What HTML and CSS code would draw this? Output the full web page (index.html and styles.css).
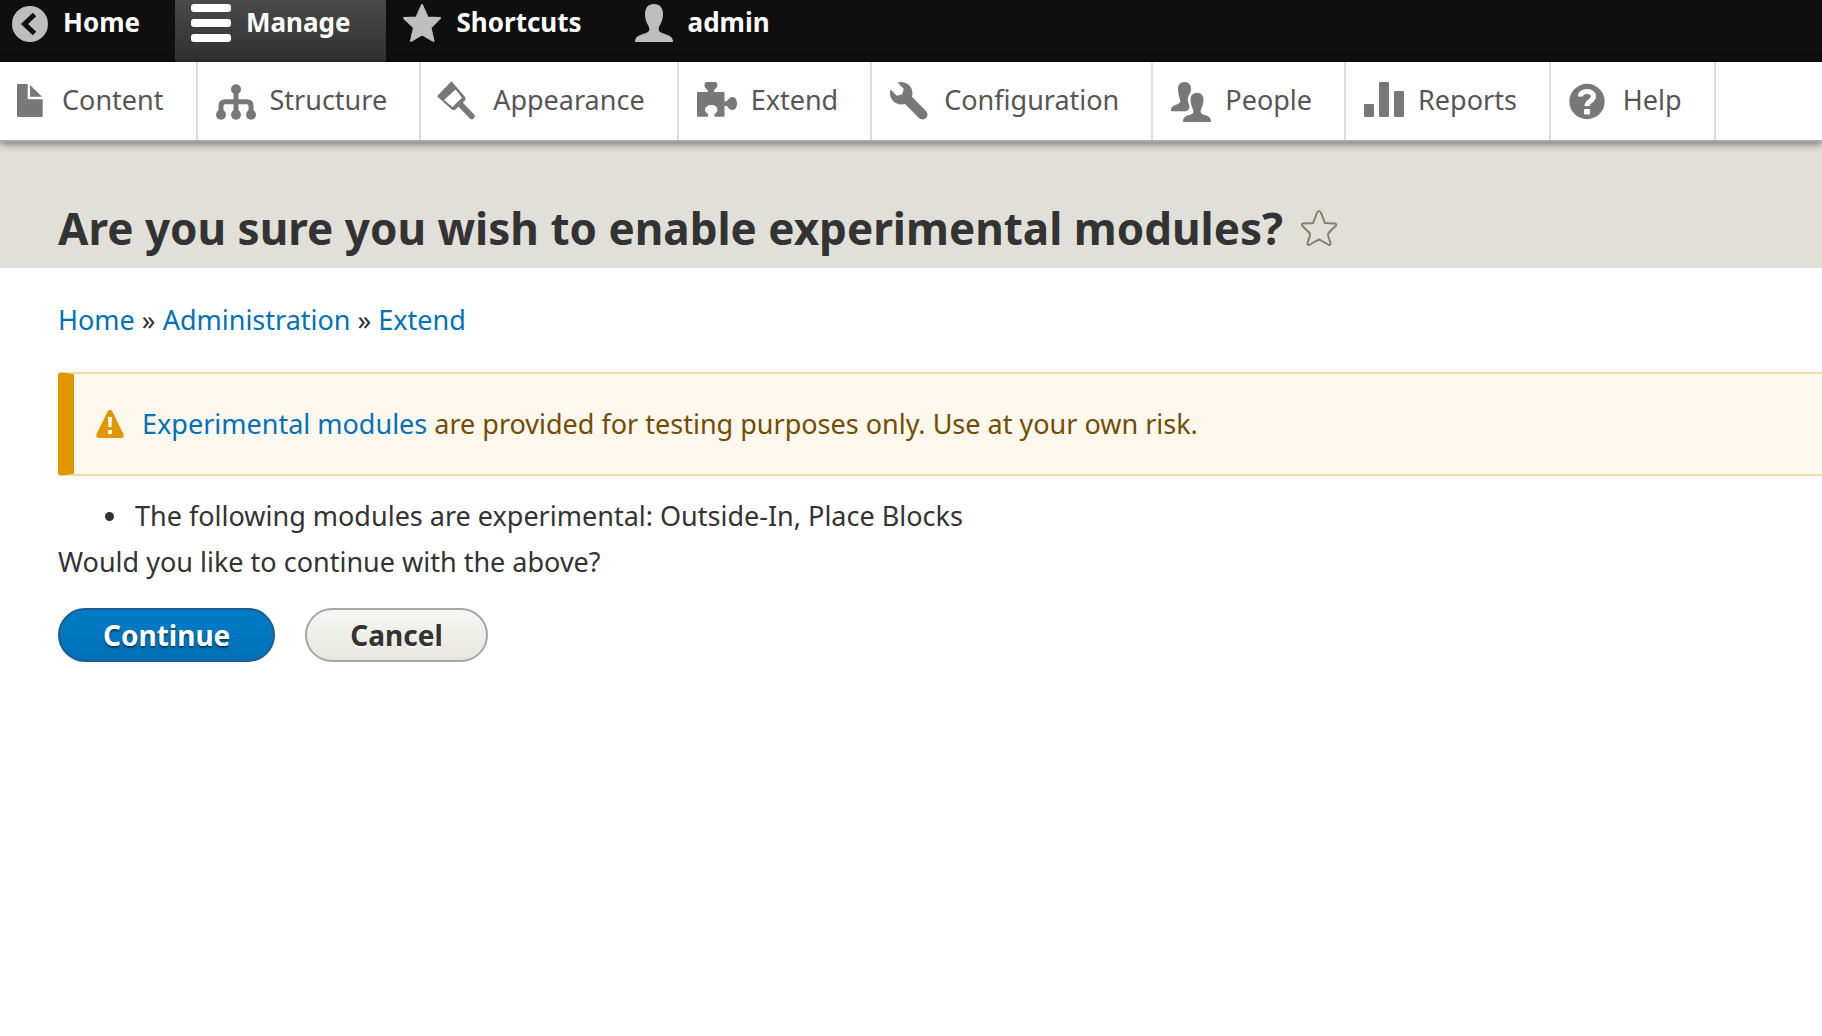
FILE: index.html
```
<!DOCTYPE html>
<html lang="en">
<head>
  <meta charset="UTF-8">
  <title>Are you sure you wish to enable experimental modules?</title>
  <meta name="viewport" content="width=device-width, initial-scale=1.0">
  <link rel="stylesheet" href="styles.css">
</head>
<body>

  <nav class="toolbar-bar" aria-label="Administration toolbar">
    <a class="tab" href="#">
      <svg class="icon" viewBox="0 0 40 40"><circle cx="22" cy="20" r="18"/><path d="M26.5 10.5L16.5 20l10 9.500" fill="none" stroke="#0f0f0f" stroke-width="5"/></svg>
      Home
    </a>
    <a class="tab active" href="#">
      <svg class="icon" viewBox="0 0 40 40"><rect width="40" height="8" rx="3"/><rect y="15" width="40" height="8" rx="3"/><rect y="30" width="40" height="8" rx="3"/></svg>
      Manage
    </a>
    <a class="tab" href="#">
      <svg class="icon" viewBox="0 0 40 40"><path d="M20 1l5.500 12.500L38 14 28.500 23.500 31.500 37 20 30.500 9 37l3-13.500L2 14l12.500-.5z" stroke="#bebebe" stroke-width="2" stroke-linejoin="round"/></svg>
      Shortcuts
    </a>
    <a class="tab" href="#">
      <svg class="icon" viewBox="0 0 40 40"><path d="M21 0c6 0 9 4 9 10 0 6-2 9-4 13-1 3 0 5 3 6 6 2 11 3 11 9H2c0-6 5-7 11-9 3-1 4-3 3-6-2-4-4-7-4-13 0-6 3-10 9-10z"/></svg>
      admin
    </a>
  </nav>

  <nav class="toolbar-tray" aria-label="Administration menu">
    <a class="tray-item" href="#">
      <svg class="icon" viewBox="0 0 40 40"><path d="M10 3h9.700v15.300h15V35q0 1-1 1H10q-1 0-1-1V4q0-1 1-1zM22 4l12 11.700H22z"/></svg>
      Content
    </a>
    <a class="tray-item" href="#">
      <svg class="icon" viewBox="0 0 40 40"><circle cx="20" cy="8.300" r="5"/><circle cx="5" cy="33.700" r="5"/><circle cx="20" cy="33.700" r="5"/><circle cx="35" cy="33.700" r="5"/><path d="M20 8v24M5 32v-7q0-4.200 4-4.200h22q4 0 4 4.200v7" fill="none" stroke="#787878" stroke-width="5"/></svg>
      Structure
    </a>
    <a class="tray-item" href="#">
      <svg class="icon" viewBox="0 0 40 40"><path d="M-2 15.300L11.700 1c.6-.4 1-.4 1.500 0l13.100 15.300v3L15.700 29.300 13 28.700zM5 19l8.500 7 9.500-9.300-6.500-8.200z" fill-rule="evenodd"/><path d="M21 23l11.700 12.300" stroke="#787878" stroke-width="6" stroke-linecap="round"/></svg>
      Appearance
    </a>
    <a class="tray-item" href="#">
      <svg class="icon" viewBox="0 0 40 40"><path d="M1 11h9c1 0 1.500-1 .5-2C9 7.500 7 6 7.500 3.500 7.700 2 8.500 1 10 1h8c1.500 0 2.300 1 2.500 2.500.3 2.500-2 4-3.300 5.500-.7 1-.2 2 .8 2h8.500q1 0 1 1v8c.5 1 2 .7 3-.5 1-1.500 2.500-3.500 5-3.500 3 0 4.500 3 4.500 6.500s-1.500 6.500-4.500 6.500c-2.500 0-4-2-5-3.300-1-1.200-2.500-1.200-3-.2V35q0 .7-1 .7h-8.500c-1-.7-.7-2.500.5-3.500 1.500-1 2-2 2-3.500 0-3-3-4.700-6-4.700s-6.500 1.700-6.500 4.700c0 1.500.7 2.500 2.200 3.500 1.200 1 1.500 2.800.5 3.500H1q-1 0-1-.7V12q0-1 1-1z"/></svg>
      Extend
    </a>
    <a class="tray-item" href="#">
      <svg class="icon" viewBox="0 0 16 16"><path transform="translate(0 .4)" d="M14.416 11.586l-.01-.008v-.001l-5.656-5.656c.15-.449.252-.921.252-1.421 0-2.485-2.016-4.500-4.502-4.500-.505 0-.981.102-1.434.255l2.431 2.431-.588 2.196-2.196.588-2.445-2.445c-.162.464-.268.956-.268 1.475 0 2.486 2.014 4.500 4.500 4.500.5 0 .972-.102 1.421-.251l5.667 5.665c.781.781 2.047.781 2.828 0s.781-2.047 0-2.828z"/></svg>
      Configuration
    </a>
    <a class="tray-item" href="#">
      <svg class="icon" viewBox="0 0 40 40"><path d="M13.500 1c4.500 0 6.500 3 6.500 7 0 2-.5 3.500-1.500 5-2 3-2 6-1 9 .7 2 1.500 4 .5 5.500-.5 1.500-1.500 2-3 2.700H0c0-4 1.500-5 5-6.500 3.500-1.400 5-2.200 4-5.200-1-3-2-6-2-10.500C7 4 9 1 13.500 1z"/><path class="front" d="M26.200 11.700c4.200 0 6.300 3 6.300 7 0 4.500-1.500 6.800-2.500 9.800s0 4.500 3 5.300c4.500 1.200 7 2.700 7 7.200H12c0-4.500 2.500-6 7-7.200 3-.8 4-2.300 3-5.300s-2.500-5.300-2.500-9.800c0-4 2.200-7 6.700-7z"/></svg>
      People
    </a>
    <a class="tray-item" href="#">
      <svg class="icon" viewBox="0 0 40 40"><rect y="23" width="10" height="13" rx="1"/><rect x="15" y="1" width="10" height="35" rx="1"/><rect x="30" y="10" width="10" height="26" rx="1"/></svg>
      Reports
    </a>
    <a class="tray-item" href="#">
      <svg class="icon" viewBox="0 0 40 40"><circle cx="18" cy="20.500" r="17.700"/><path d="M11.500 15.500c0-3.500 3-5 6.500-5s6.500 1.700 6.500 5c0 4.500-6.500 4.500-6.500 9.500" fill="none" stroke="#fff" stroke-width="5"/><rect x="15" y="28" width="6" height="5.500" rx="1" fill="#fff"/></svg>
      Help
    </a>
  </nav>

  <header class="page-header">
    <h1>Are you sure you wish to enable experimental modules?</h1>
    <button class="shortcut" type="button" aria-label="Add to shortcuts">
      <svg viewBox="0 0 36 36"><path d="M18 1c1 0 1.500 1 2 2l4 10 10 .5c1.500.3 1.500 1.500.5 2.500l-7 7c-.7 1-.5 2 0 4l2 6c.3 2-1 2.500-2.500 1.500L18 29.500l-9 5c-1.500 1-2.800.5-2.500-1.500l2-6c.5-2 .7-3 0-4l-7-7c-1-1-1-2.200.5-2.500L12 13l4-10c.5-1 1-2 2-2z" fill="none" stroke="#82826c" stroke-width="2"/></svg>
    </button>
  </header>

  <main class="content">
    <nav class="breadcrumb" aria-label="Breadcrumb">
      <a href="#">Home</a> » <a href="#">Administration</a> » <a href="#">Extend</a>
    </nav>

    <div class="message" role="alert">
      <svg class="message-icon" viewBox="0 0 28 28"><path d="M14 0c1.300 0 2 .6 2.600 1.800l10.700 22c1 2.200.2 4.200-2.300 4.200H3c-2.500 0-3.300-2-2.300-4.200l10.700-22C12 .6 12.700 0 14 0z" fill="#e29700"/><path d="M12 7h4l-.5 10h-3zM12 20h4v4h-4z" fill="#fff"/></svg>
      <p><a href="#">Experimental modules</a> are provided for testing purposes only. Use at your own risk.</p>
    </div>

    <form class="confirm-form">
      <ul>
        <li>The following modules are experimental: Outside-In, Place Blocks</li>
      </ul>
      <p>Would you like to continue with the above?</p>
      <div class="actions">
        <button class="button primary" type="button">Continue</button>
        <button class="button" type="button">Cancel</button>
      </div>
    </form>
  </main>

</body>
</html>
```
FILE: styles.css
```
:root {
  --link: #0071b8;
  --text: #333;
}

body {
  margin: 0;
  font-family: "Lucida Grande", "Noto Sans", sans-serif;
  font-size: 27px;
  line-height: 40px;
  color: var(--text);
  background: #fff;
}

a {
  color: var(--link);
  text-decoration: none;
}

/* Toolbar */
.icon {
  width: 40px;
  height: 40px;
  flex: none;
  overflow: visible;
}

.toolbar-bar {
  display: flex;
  background: #0f0f0f;
}

.tab {
  display: flex;
  gap: 15px;
  padding: 4px 35px 18px 16px;
  color: #fff;
  font-size: 26px;
  font-weight: bold;
  line-height: 36px;
}

.tab:first-child,
.tray-item:first-child {
  padding-left: 8px;
}

.tab .icon {
  fill: #bebebe;
}

.tab.active {
  background: linear-gradient(#4a4a4a, #303030);
}

.tab.active .icon {
  fill: #fff;
}

.toolbar-tray {
  position: relative;
  display: flex;
  background: #fff;
  border-bottom: 2px solid #a9a9a7;
  box-shadow: 0 2px 8px rgba(0, 0, 0, 0.5);
}

.tray-item {
  display: flex;
  gap: 14px;
  padding: 19px 32px 19px 18px;
  border-right: 2px solid #ddd;
  color: #565656;
  line-height: 38px;
}

.tray-item .icon {
  fill: #787878;
}

.front {
  stroke: #fff;
  stroke-width: 4px;
  paint-order: stroke;
}

/* Page header */
.page-header {
  display: flex;
  align-items: center;
  gap: 18px;
  padding: 56px 58px 10px;
  background: #e0e0d8;
}

h1 {
  margin: 0;
  font-size: 44px;
  line-height: 60px;
}

.shortcut {
  display: flex;
  padding: 0;
  border: 0;
  background: none;
}

.shortcut svg {
  width: 36px;
  height: 36px;
}

/* Content */
.content {
  padding: 32px 0 0 58px;
}

.message {
  display: flex;
  align-items: center;
  gap: 18px;
  margin: 32px 0 20px;
  padding: 30px 22px;
  border: 2px solid #f4daa6;
  border-left: 16px solid #e29700;
  border-right: 0;
  border-radius: 4px 0 0 4px;
  background: #fdf8ed;
  color: #734c00;
}

.message p {
  margin: 0;
}

.message-icon {
  width: 28px;
  height: 28px;
}

.confirm-form ul {
  margin: 0;
  padding-left: 47px;
  list-style: none;
}

.confirm-form li {
  display: flex;
  align-items: center;
  gap: 21px;
}

.confirm-form li::before {
  content: "";
  width: 9px;
  height: 9px;
  border-radius: 50%;
  background: var(--text);
}

.confirm-form p {
  margin: 6px 0 26px;
}

.actions {
  display: flex;
  gap: 30px;
}

.button {
  padding: 5px 43px;
  border: 2px solid #a6a6a6;
  border-radius: 27px;
  background: linear-gradient(#f6f6f3, #e7e7df);
  color: var(--text);
  font-family: inherit;
  font-size: 28px;
  font-weight: bold;
  line-height: 40px;
  text-shadow: 0 2px rgba(255, 255, 255, 0.6);
}

.button.primary {
  border-color: #1e5c90;
  background: linear-gradient(#007bc6, #0071b8);
  color: #fff;
  text-shadow: 0 2px 2px rgba(0, 0, 0, 0.5);
}
```
